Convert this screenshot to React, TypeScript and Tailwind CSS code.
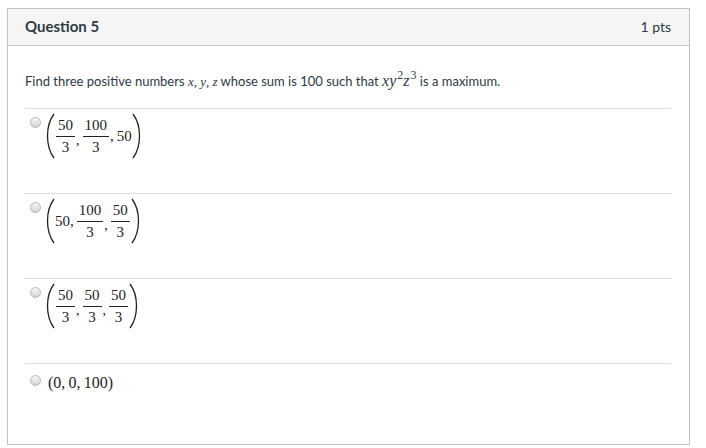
import React from 'react';

const serif = "font-['Liberation_Serif','DejaVu_Serif',serif]";

const Frac = ({ n, d }: { n: string; d: string }) => (
  <span className="inline-flex flex-col items-center mx-[1px]">
    <span className="px-[2px] leading-[17px]">{n}</span>
    <span className="block w-full h-px bg-[#222] my-[2px]" />
    <span className="px-[2px] leading-[17px]">{d}</span>
  </span>
);

const Paren = ({ side }: { side: 'l' | 'r' }) => (
  <svg width="9" height="46" viewBox="0 0 9 46" className="shrink-0">
    {side === 'l' ? (
      <path d="M8 1 C 2 9, 1.5 17, 1.5 23 C 1.5 29, 2 37, 8 45" fill="none" stroke="#222" strokeWidth="1.3" />
    ) : (
      <path d="M1 1 C 7 9, 7.5 17, 7.5 23 C 7.5 29, 7 37, 1 45" fill="none" stroke="#222" strokeWidth="1.3" />
    )}
  </svg>
);

const Radio = () => (
  <span className="block w-[11px] h-[11px] rounded-full border border-[#b8b8b8] bg-gradient-to-b from-[#f6f6f6] to-[#d4d4d4] shrink-0" />
);

const Comma = () => <span className="self-center mt-[8px] mr-[2px] text-[14px]">,</span>;

export default function App() {
  const options = [
    <>
      <Paren side="l" />
      <Frac n="50" d="3" />
      <Comma />
      <Frac n="100" d="3" />
      <span className="self-center">,&thinsp;50</span>
      <Paren side="r" />
    </>,
    <>
      <Paren side="l" />
      <span className="self-center mr-[2px]">50,</span>
      <Frac n="100" d="3" />
      <Comma />
      <Frac n="50" d="3" />
      <Paren side="r" />
    </>,
    <>
      <Paren side="l" />
      <Frac n="50" d="3" />
      <Comma />
      <Frac n="50" d="3" />
      <Comma />
      <Frac n="50" d="3" />
      <Paren side="r" />
    </>,
  ];

  return (
    <div className="w-[706px] h-[448px] bg-white pt-[8px] pl-[7px] font-['Lato',sans-serif]">
      <div className="w-[683px] h-[437px] border border-[#c4c4c4] flex flex-col">
        <div className="h-[37px] bg-[#f5f5f5] border-b border-[#c4c4c4] flex items-center justify-between pl-[17px] pr-[18px] pb-[2px]">
          <span className="text-[15px] font-bold text-[#2d3b45]">Question 5</span>
          <span className="text-[14px] text-[#2d3b45]">1 pts</span>
        </div>
        <div className="px-[17px] pr-[18px] flex flex-col">
          <p className="mt-[23px] h-[39px] text-[13px] text-[#2d3b45] flex items-baseline">
            <span>Find three positive numbers&nbsp;</span>
            <span className={`${serif} italic text-[13px]`}>x</span>
            <span className={`${serif} text-[13px]`}>,&nbsp;</span>
            <span className={`${serif} italic text-[13px]`}>y</span>
            <span className={`${serif} text-[13px]`}>,&nbsp;</span>
            <span className={`${serif} italic text-[13px]`}>z</span>
            <span>&nbsp;whose sum is 100 such that&nbsp;</span>
            <span className={`${serif} italic text-[16px]`}>xy</span>
            <span className={`${serif} text-[12px] relative -top-[7px] ml-[1px]`}>2</span>
            <span className={`${serif} italic text-[16px]`}>z</span>
            <span className={`${serif} text-[12px] relative -top-[7px] ml-[1px]`}>3</span>
            <span>&nbsp;is a maximum.</span>
          </p>
          {options.map((o, i) => (
            <div key={i} className="h-[85px] border-t border-[#dddddd] flex items-start gap-[5px] pl-[5px] pt-[4px]">
              <span className="mt-[4px]"><Radio /></span>
              <span className={`${serif} text-[15px] text-[#222] flex items-center`}>{o}</span>
            </div>
          ))}
          <div className="h-[60px] border-t border-[#dddddd] flex items-start gap-[7px] pl-[5px] pt-[7px]">
            <span className="mt-[4px]"><Radio /></span>
            <span className={`${serif} text-[16px] text-[#222]`}>(0,&thinsp;0,&thinsp;100)</span>
          </div>
        </div>
      </div>
    </div>
  );
}
